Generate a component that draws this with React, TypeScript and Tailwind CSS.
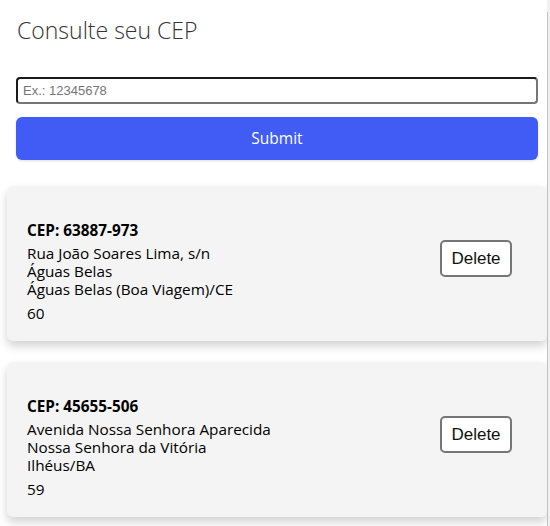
import React from "react"

const ceps = [
  {
    cep: "63887-973",
    logradouro: "Rua João Soares Lima, s/n",
    bairro: "Águas Belas",
    cidade: "Águas Belas (Boa Viagem)/CE",
    ddd: "60",
  },
  {
    cep: "45655-506",
    logradouro: "Avenida Nossa Senhora Aparecida",
    bairro: "Nossa Senhora da Vitória",
    cidade: "Ilhéus/BA",
    ddd: "59",
  },
]

function CepCard({ item }: { item: (typeof ceps)[number] }) {
  return (
    <div className="ml-[7px] flex items-start justify-between rounded-md bg-[#f4f4f4] pl-5 pr-[35px] shadow-[0_5px_10px_rgba(0,0,0,0.18)]">
      <div className="pt-[35px] pb-[19px] text-[15.3px] leading-[18px] text-black">
        <h3 className="mb-[5px] font-bold">CEP: {item.cep}</h3>
        <p>{item.logradouro}</p>
        <p>{item.bairro}</p>
        <p>{item.cidade}</p>
        <p className="mt-[6px]">{item.ddd}</p>
      </div>
      <button className="mt-[54px] h-[37px] w-[72px] rounded-[5px] border-2 border-[#767676] bg-white font-['Liberation_Sans',Arial,sans-serif] text-[17px] text-[#111]">
        Delete
      </button>
    </div>
  )
}

export default function App() {
  return (
    <div className="relative min-h-screen bg-white font-['Open_Sans',sans-serif]">
      <div className="w-[547px]">
        <h1 className="pl-[17px] pt-[14px] text-[23px] leading-[32px] font-light text-[#333]">
          Consulte seu CEP
        </h1>
        <form className="pl-4 pr-[9px] pt-[31px]" onSubmit={(e) => e.preventDefault()}>
          <input
            type="text"
            placeholder="Ex.: 12345678"
            className="h-[27px] w-full rounded-[4px] border-2 border-t-[#1b1b1b] border-l-[#1b1b1b] border-r-[#767676] border-b-[#767676] px-[5px] font-['Liberation_Sans',Arial,sans-serif] text-[13px] placeholder:text-[#757575] outline-none"
          />
          <button
            type="submit"
            className="mt-[13px] h-[43px] w-full rounded-md bg-[#405cf5] text-[15.5px] text-white shadow-[0_1px_3px_rgba(0,0,0,0.12)]"
          >
            Submit
          </button>
        </form>
        <div className="mt-[26px] flex flex-col gap-[21px] pb-6">
          {ceps.map((c) => (
            <CepCard key={c.cep} item={c} />
          ))}
        </div>
      </div>
      <div className="fixed top-0 right-0 h-full w-[3px] bg-[#f1f1f1]">
        <div className="mt-[12px] h-full w-px bg-[#c1c1c1]" />
      </div>
    </div>
  )
}
